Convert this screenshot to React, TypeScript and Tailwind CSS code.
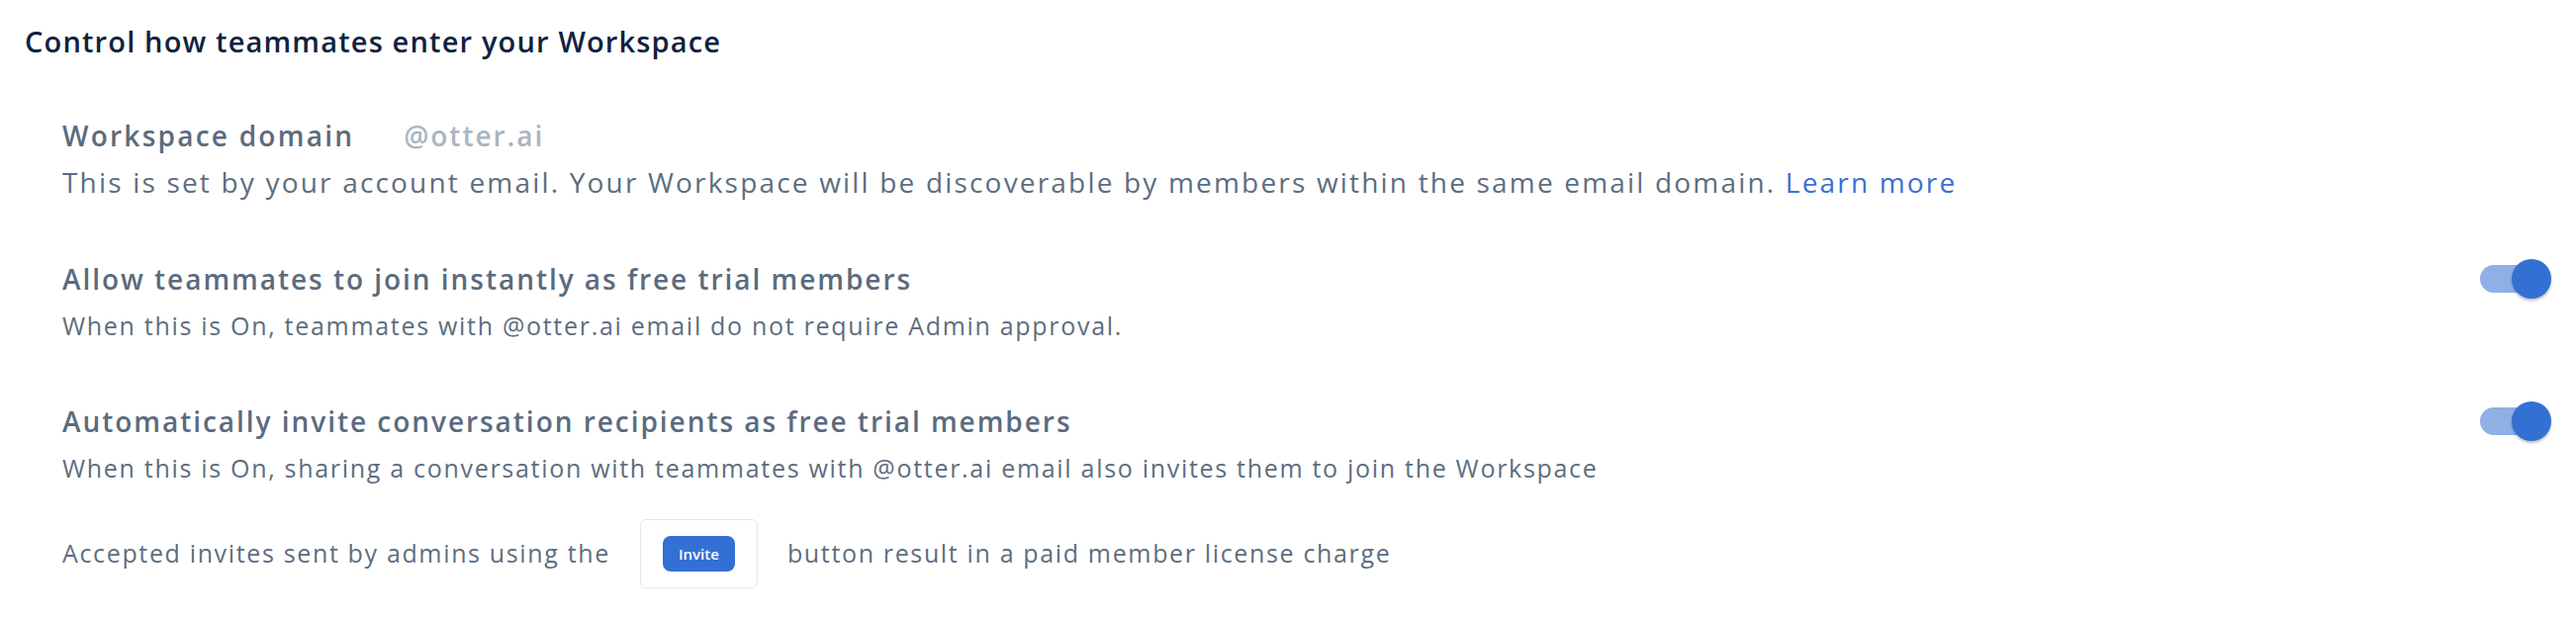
import React from "react";

function Toggle() {
  return (
    <div className="relative w-[64px] h-[28px] mr-[8px] shrink-0">
      <div className="absolute inset-0 rounded-full bg-[#8fb0e6]" />
      <div className="absolute right-[-8px] top-[-6px] w-[40px] h-[40px] rounded-full bg-[#3370d4] shadow-[0_2px_3px_rgba(0,0,0,0.25)]" />
    </div>
  );
}

interface SettingProps {
  title: string;
  description: string;
}

function SettingRow({ title, description }: SettingProps) {
  return (
    <div className="flex justify-between">
      <div>
        <div className="text-[28px] leading-[36px] font-semibold tracking-[0.07em] text-[#5b6b7f]">{title}</div>
        <div className="text-[25px] leading-[36px] mt-[11px] tracking-[0.068em] text-[#5d6d80]">{description}</div>
      </div>
      <div className="h-[36px] flex items-center">
        <Toggle />
      </div>
    </div>
  );
}

export default function App() {
  return (
    <div
      className="w-[2604px] h-[626px] bg-white px-[25px] pt-[24px]"
      style={{ fontFamily: "'Open Sans', 'Noto Sans', sans-serif" }}
    >
      <h1 className="text-[29px] leading-[36px] font-semibold tracking-[0.04em] text-[#0f2240]">
        Control how teammates enter your Workspace
      </h1>

      <div className="pl-[38px]">
        {/* Workspace domain */}
        <div className="mt-[59px]">
          <div className="flex items-center gap-[50px] text-[28px] leading-[36px] tracking-[0.08em]">
            <span className="font-semibold text-[#5b6b7f]">Workspace domain</span>
            <span className="font-semibold tracking-[0.07em] text-[#aab5c3]">@otter.ai</span>
          </div>
          <div className="text-[28px] leading-[36px] mt-[11px] tracking-[0.078em] text-[#5d6d80]">
            This is set by your account email. Your Workspace will be discoverable by members within the same email
            domain. <span className="text-[#3b6fd4]">Learn more</span>
          </div>
        </div>

        <div className="mt-[62px]">
          <SettingRow
            title="Allow teammates to join instantly as free trial members"
            description="When this is On, teammates with @otter.ai email do not require Admin approval."
          />
        </div>

        <div className="mt-[61px]">
          <SettingRow
            title="Automatically invite conversation recipients as free trial members"
            description="When this is On, sharing a conversation with teammates with @otter.ai email also invites them to join the Workspace"
          />
        </div>

        <div className="mt-[34px] flex items-center text-[25px] tracking-[0.066em] text-[#5d6d80]">
          <span>Accepted invites sent by admins using the</span>
          <div className="mx-[30px] w-[119px] h-[70px] rounded-[6px] border border-[#e6e7ee] flex items-center justify-center">
            <div className="w-[73px] h-[36px] rounded-[8px] bg-[#3370d4] text-white text-[15px] font-semibold tracking-normal flex items-center justify-center">
              Invite
            </div>
          </div>
          <span>button result in a paid member license charge</span>
        </div>
      </div>
    </div>
  );
}
